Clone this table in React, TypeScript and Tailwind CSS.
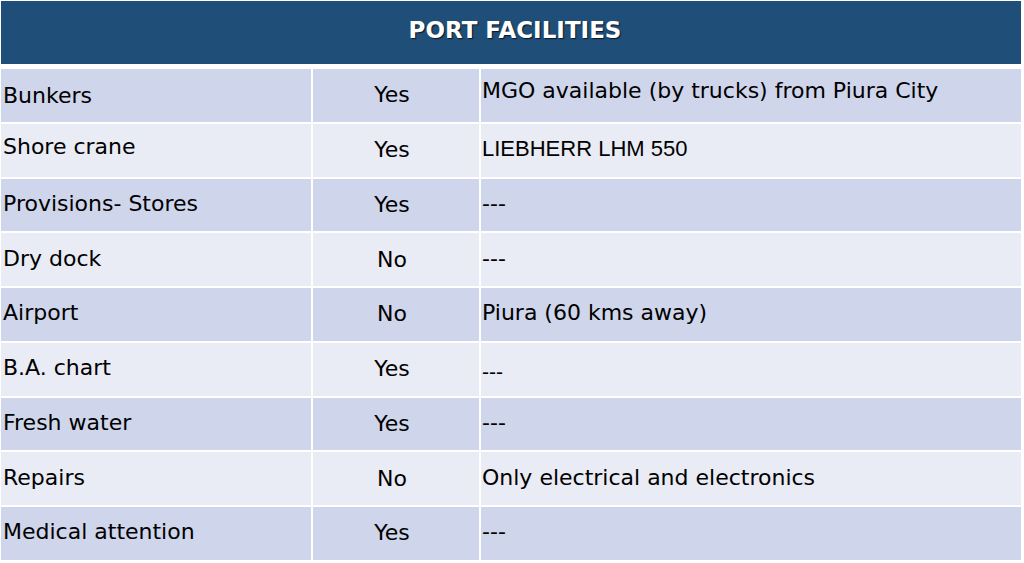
const rows: { name: string; avail: string; note: string; arial?: boolean; small?: boolean }[] = [
  { name: 'Bunkers', avail: 'Yes', note: 'MGO available (by trucks) from Piura City' },
  { name: 'Shore crane', avail: 'Yes', note: 'LIEBHERR LHM 550', arial: true },
  { name: 'Provisions- Stores', avail: 'Yes', note: '---' },
  { name: 'Dry dock', avail: 'No', note: '---' },
  { name: 'Airport', avail: 'No', note: 'Piura (60 kms away)' },
  { name: 'B.A. chart', avail: 'Yes', note: '---', small: true },
  { name: 'Fresh water', avail: 'Yes', note: '---' },
  { name: 'Repairs', avail: 'No', note: 'Only electrical and electronics' },
  { name: 'Medical attention', avail: 'Yes', note: '---' },
];

export default function App() {
  return (
    <div className="w-[1024px] h-[563px] bg-white overflow-hidden pt-px pl-px font-['DejaVu_Sans',Verdana,sans-serif] text-black">
      <div className="w-[1020px] flex flex-col">
        {/* Header */}
        <div className="h-[63px] bg-[#1f4e78] flex items-center justify-center pb-[4px] pl-[8px]">
          <span className="text-white font-bold text-[23px] [text-shadow:1px_1px_1px_rgba(0,0,0,0.7)]">
            PORT FACILITIES
          </span>
        </div>

        {/* Rows */}
        <div className="mt-[5px] flex flex-col gap-[2px]">
          {rows.map((r, i) => {
            const bg = i % 2 === 0 ? 'bg-[#cfd5ea]' : 'bg-[#e9ebf5]';
            return (
              <div key={r.name} className="h-[52.75px] grid grid-cols-[310px_166px_1fr] gap-[2px] text-[22px] leading-none">
                <div className={`flex items-center pl-[2px] ${i === 1 ? 'pb-[6px]' : i === 0 ? 'pt-[2px]' : 'pb-[2px]'} ${bg}`}>{r.name}</div>
                <div className={`flex items-center justify-center pr-[8px] ${bg}`}>{r.avail}</div>
                <div className={`flex items-center pl-[1px] ${i === 0 ? 'pb-[8px]' : 'pb-[2px]'} ${bg}`}>
                  {r.arial ? (
                    <span className="font-['Liberation_Sans',Arial,sans-serif] text-[22px]">{r.note}</span>
                  ) : r.small ? (
                    <span className="font-['Liberation_Sans',Arial,sans-serif] text-[21px] pt-[6px]">{r.note}</span>
                  ) : (
                    r.note
                  )}
                </div>
              </div>
            );
          })}
        </div>
      </div>
    </div>
  );
}
